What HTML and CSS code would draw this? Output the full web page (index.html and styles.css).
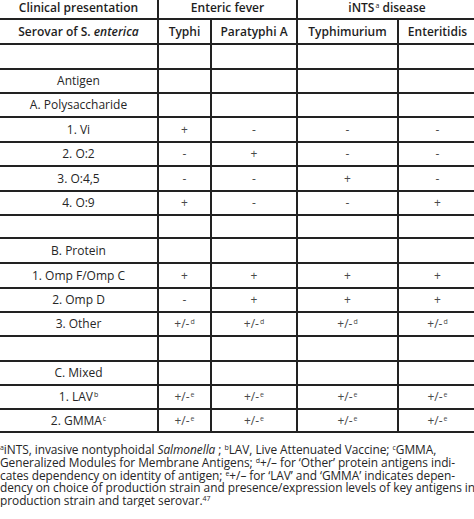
FILE: index.html
```html
<!DOCTYPE html>
<html lang="en">
<head>
<meta charset="utf-8">
<title>Salmonella antigens</title>
<link rel="stylesheet" href="styles.css">
</head>
<body>
<div class="tbl">
  <div class="c hd"><span>Clinical presentation</span></div>
  <div class="c hd span2"><span>Enteric fever</span></div>
  <div class="c hd span2"><span>iNTS<sup class="sup">a</sup> disease</span></div>

  <div class="c hd"><span>Serovar of S. <i>enterica</i></span></div>
  <div class="c hd"><span>Typhi</span></div>
  <div class="c hd"><span>Paratyphi A</span></div>
  <div class="c hd"><span>Typhimurium</span></div>
  <div class="c hd"><span>Enteritidis</span></div>

  <div class="c"></div><div class="c"></div><div class="c"></div><div class="c"></div><div class="c"></div>

  <div class="c"><span>Antigen</span></div><div class="c"></div><div class="c"></div><div class="c"></div><div class="c"></div>

  <div class="c"><span>A. Polysaccharide</span></div><div class="c"></div><div class="c"></div><div class="c"></div><div class="c"></div>

  <div class="c"><span>1. Vi</span></div><div class="c v"><span>+</span></div><div class="c v"><span>-</span></div><div class="c v"><span>-</span></div><div class="c v"><span>-</span></div>
  <div class="c"><span>2. O:2</span></div><div class="c v"><span>-</span></div><div class="c v"><span>+</span></div><div class="c v"><span>-</span></div><div class="c v"><span>-</span></div>
  <div class="c"><span>3. O:4,5</span></div><div class="c v"><span>-</span></div><div class="c v"><span>-</span></div><div class="c v"><span>+</span></div><div class="c v"><span>-</span></div>
  <div class="c"><span>4. O:9</span></div><div class="c v"><span>+</span></div><div class="c v"><span>-</span></div><div class="c v"><span>-</span></div><div class="c v"><span>+</span></div>

  <div class="c"></div><div class="c"></div><div class="c"></div><div class="c"></div><div class="c"></div>

  <div class="c"><span>B. Protein</span></div><div class="c"></div><div class="c"></div><div class="c"></div><div class="c"></div>

  <div class="c"><span>1. Omp F/Omp C</span></div><div class="c v"><span>+</span></div><div class="c v"><span>+</span></div><div class="c v"><span>+</span></div><div class="c v"><span>+</span></div>
  <div class="c"><span>2. Omp D</span></div><div class="c v"><span>-</span></div><div class="c v"><span>+</span></div><div class="c v"><span>+</span></div><div class="c v"><span>+</span></div>
  <div class="c"><span>3. Other</span></div><div class="c v"><span>+/-<sup class="sup">d</sup></span></div><div class="c v"><span>+/-<sup class="sup">d</sup></span></div><div class="c v"><span>+/-<sup class="sup">d</sup></span></div><div class="c v"><span>+/-<sup class="sup">d</sup></span></div>

  <div class="c"></div><div class="c"></div><div class="c"></div><div class="c"></div><div class="c"></div>

  <div class="c"><span>C. Mixed</span></div><div class="c"></div><div class="c"></div><div class="c"></div><div class="c"></div>

  <div class="c"><span>1. LAV<sup class="sup">b</sup></span></div><div class="c v"><span>+/-<sup class="sup">e</sup></span></div><div class="c v"><span>+/-<sup class="sup">e</sup></span></div><div class="c v"><span>+/-<sup class="sup">e</sup></span></div><div class="c v"><span>+/-<sup class="sup">e</sup></span></div>
  <div class="c"><span>2. GMMA<sup class="sup">c</sup></span></div><div class="c v"><span>+/-<sup class="sup">e</sup></span></div><div class="c v"><span>+/-<sup class="sup">e</sup></span></div><div class="c v"><span>+/-<sup class="sup">e</sup></span></div><div class="c v"><span>+/-<sup class="sup">e</sup></span></div>
</div>
<div class="notes">
  <div class="ln"><sup class="fs">a</sup>iNTS, invasive nontyphoidal <i>Salmonella</i> ; <sup class="fs">b</sup>LAV, Live Attenuated Vaccine; <sup class="fs">c</sup>GMMA,</div>
  <div class="ln">Generalized Modules for Membrane Antigens; <sup class="fs">d</sup>+/– for ‘Other’ protein antigens indi-</div>
  <div class="ln">cates dependency on identity of antigen; <sup class="fs">e</sup>+/– for ‘LAV’ and ‘GMMA’ indicates depen-</div>
  <div class="ln">dency on choice of production strain and presence/expression levels of key antigens in</div>
  <div class="ln">production strain and target serovar.<sup class="fs">47</sup></div>
</div>
</body>
</html>
```
FILE: styles.css
```css
html, body {
  margin: 0;
  padding: 0;
  background: #ffffff;
  overflow: hidden;
}

body {
  font-family: "Open Sans", "Liberation Sans", sans-serif;
  color: #222222;
}

.tbl {
  display: grid;
  grid-template-columns: 157px 51px 84px 99px 77px;
  grid-template-rows: 20px 23px 23px 22px 22px 23px 22px 23px 22px 21px 23px 23px 22px 22px 23px 22px 22px 21px;
  gap: 2px;
  padding: 2px;
  background: #222222;
  width: max-content;
  margin: -4px 0 0 -2px;
}

.c {
  background: #ffffff;
  display: flex;
  align-items: center;
  justify-content: center;
  font-size: 12px;
  line-height: 1;
  white-space: nowrap;
  color: #262626;
}

.hd {
  font-weight: 600;
  color: #1e1e1e;
}

.span2 {
  grid-column: span 2;
}

.v {
  color: #4a4a4a;
  font-size: 12px;
}

.sup {
  font-size: 7px;
  position: relative;
  top: -4px;
  vertical-align: baseline;
  margin-left: 1px;
  font-weight: 400;
}

.notes {
  margin: 10px 0 0 0;
  font-size: 11.9px;
  line-height: 12.8px;
  letter-spacing: -0.05px;
  color: #262626;
}

.ln {
  white-space: nowrap;
}

.fs {
  font-size: 7px;
  line-height: 0;
  vertical-align: baseline;
  position: relative;
  top: -4px;
}
```
